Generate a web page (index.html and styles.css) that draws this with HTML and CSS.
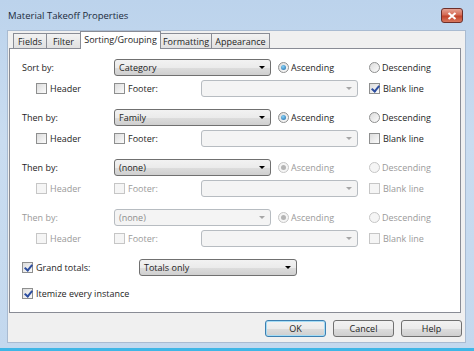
FILE: index.html
```html
<!DOCTYPE html>
<html lang="en">
<head>
    <meta charset="UTF-8">
    <title>Material Takeoff Properties</title>
    <link rel="stylesheet" href="styles.css">
</head>
<body>
    <div class="window">
        <div class="titlebar">
            <span class="title">Material Takeoff Properties</span>
            <span class="close">
                <svg width="10" height="8" viewBox="0 0 10 8"><path d="M1.5 1 L8.5 7 M8.5 1 L1.5 7" stroke="#fff" stroke-width="2"/></svg>
            </span>
        </div>

        <div class="client">
            <div class="tabs">
                <div class="tab t-fields">Fields</div>
                <div class="tab t-filter">Filter</div>
                <div class="tab t-sort active">Sorting/Grouping</div>
                <div class="tab t-format">Formatting</div>
                <div class="tab t-appear">Appearance</div>
            </div>

            <div class="panel">
                <!-- Nivel 1 -->
                <div class="group">
                    <div class="row">
                        <span class="label">Sort by:</span>
                        <div class="select wide">Category<span class="arrow"></span></div>
                        <label class="opt asc"><span class="radio on"></span>Ascending</label>
                        <label class="opt"><span class="radio"></span>Descending</label>
                    </div>
                    <div class="row">
                        <label class="opt hdr"><span class="check"></span>Header</label>
                        <label class="opt ftr"><span class="check"></span>Footer:</label>
                        <div class="select wide off"><span class="arrow"></span></div>
                        <label class="opt blank"><span class="check on"></span>Blank line</label>
                    </div>
                </div>

                <!-- Nivel 2 -->
                <div class="group">
                    <div class="row">
                        <span class="label">Then by:</span>
                        <div class="select wide">Family<span class="arrow"></span></div>
                        <label class="opt asc"><span class="radio on"></span>Ascending</label>
                        <label class="opt"><span class="radio"></span>Descending</label>
                    </div>
                    <div class="row">
                        <label class="opt hdr"><span class="check"></span>Header</label>
                        <label class="opt ftr"><span class="check"></span>Footer:</label>
                        <div class="select wide off"><span class="arrow"></span></div>
                        <label class="opt blank"><span class="check"></span>Blank line</label>
                    </div>
                </div>

                <!-- Nivel 3 -->
                <div class="group">
                    <div class="row">
                        <span class="label">Then by:</span>
                        <div class="select wide">(none)<span class="arrow"></span></div>
                        <label class="opt asc dim"><span class="radio on-dim"></span>Ascending</label>
                        <label class="opt dim"><span class="radio"></span>Descending</label>
                    </div>
                    <div class="row dim">
                        <label class="opt hdr"><span class="check"></span>Header</label>
                        <label class="opt ftr"><span class="check"></span>Footer:</label>
                        <div class="select wide off"><span class="arrow"></span></div>
                        <label class="opt blank"><span class="check"></span>Blank line</label>
                    </div>
                </div>

                <!-- Nivel 4 -->
                <div class="group">
                    <div class="row dim">
                        <span class="label">Then by:</span>
                        <div class="select wide off">(none)<span class="arrow"></span></div>
                        <label class="opt asc"><span class="radio on-dim"></span>Ascending</label>
                        <label class="opt"><span class="radio"></span>Descending</label>
                    </div>
                    <div class="row dim">
                        <label class="opt hdr"><span class="check"></span>Header</label>
                        <label class="opt ftr"><span class="check"></span>Footer:</label>
                        <div class="select wide off"><span class="arrow"></span></div>
                        <label class="opt blank"><span class="check"></span>Blank line</label>
                    </div>
                </div>

                <div class="row totals">
                    <label class="opt grand"><span class="check on"></span>Grand totals:</label>
                    <div class="select mid">Totals only<span class="arrow"></span></div>
                </div>
                <div class="row itemize">
                    <label class="opt"><span class="check on"></span>Itemize every instance</label>
                </div>
            </div>

            <div class="buttons">
                <button class="btn default">OK</button>
                <button class="btn">Cancel</button>
                <button class="btn">Help</button>
            </div>
        </div>
    </div>
</body>
</html>
```

FILE: styles.css
```css
/* Ventana estilo Windows 7 */
body {
    margin: 0;
    background: #fff;
    font-family: "Open Sans", "DejaVu Sans", sans-serif;
    font-size: 9px;
    color: #1e1e1e;
}

.window {
    width: 474px;
    height: 351px;
    box-sizing: border-box;
    background: linear-gradient(to bottom, #bcd3ec 0%, #c9dcf0 40%, #c3d8ee 100%);
    display: flex;
    flex-direction: column;
    position: relative;
}

.window::after {
    content: "";
    position: absolute;
    left: 0;
    right: 0;
    bottom: 0;
    height: 3px;
    background: #3fb6e6;
}

.titlebar {
    height: 30px;
    display: flex;
    align-items: center;
    justify-content: space-between;
    padding: 0 11px 0 8px;
    box-sizing: border-box;
}

.title {
    font-size: 9.5px;
    color: #1b2a3c;
    margin-top: 1px;
}

.close {
    width: 22px;
    height: 15px;
    border: 1px solid #6d2f2a;
    border-radius: 3px;
    box-sizing: border-box;
    background: linear-gradient(to bottom, #e5a293 0%, #d56b55 45%, #c2432a 55%, #d8785f 100%);
    display: flex;
    align-items: center;
    justify-content: center;
    margin-top: 1px;
}

.client {
    margin: 0 8px 8px 7px;
    flex: 1;
    background: #f0f0f0;
    border: 1px solid #a9bbd1;
    box-sizing: border-box;
    display: flex;
    flex-direction: column;
    padding: 0 0 0 1px;
}

/* Pestañas */
.tabs {
    display: flex;
    height: 17px;
    align-items: flex-end;
    padding-left: 4px;
}

.tab {
    height: 15px;
    box-sizing: border-box;
    border: 1px solid #898c95;
    border-bottom: none;
    border-left: none;
    background: linear-gradient(to bottom, #f2f2f2, #e1e1e1);
    display: flex;
    align-items: center;
    justify-content: center;
    color: #1e1e1e;
}

.t-fields { width: 34px; border-left: 1px solid #898c95; }
.t-filter { width: 34px; }
.t-sort { width: 81px; }
.t-format { width: 51px; }
.t-appear { width: 58px; }

.tab.active {
    height: 18px;
    background: #fff;
    border-left: 1px solid #898c95;
    margin-left: -1px;
    margin-bottom: -1px;
    position: relative;
    z-index: 1;
    padding-bottom: 3px;
}

.panel {
    width: 452px;
    height: 265px;
    box-sizing: border-box;
    background: #fff;
    border: 1px solid #898c95;
    padding: 10px 0 0 12px;
}

.group {
    margin-bottom: 12px;
}

.row {
    display: flex;
    align-items: center;
    height: 17px;
    margin-bottom: 4px;
}

.label {
    width: 92px;
}

.select {
    height: 17px;
    box-sizing: border-box;
    border: 1px solid #707070;
    border-radius: 3px;
    background: linear-gradient(to bottom, #f2f2f2 0%, #ebebeb 50%, #dddddd 51%, #cfcfcf 100%);
    padding: 0 0 0 4px;
    display: flex;
    align-items: center;
    position: relative;
}

.select.wide { width: 157px; }
.select.mid { width: 158px; }

.select .arrow {
    position: absolute;
    right: 5px;
    top: 6px;
    width: 0;
    height: 0;
    border-left: 3px solid transparent;
    border-right: 3px solid transparent;
    border-top: 3px solid #000;
}

.select.off {
    background: #f4f4f4;
    border-color: #b7bcc1;
    color: #8d8d8d;
}

.select.off .arrow {
    border-top-color: #a6a6a6;
}

.opt {
    display: flex;
    align-items: center;
}

.asc {
    width: 91px;
    margin-left: 7px;
}

.hdr {
    width: 78px;
    padding-left: 14px;
}

.ftr {
    width: 87px;
}

.blank {
    margin-left: 11px;
}

.grand {
    width: 117px;
}

/* Casillas y radios */
.check, .radio {
    width: 11px;
    height: 11px;
    box-sizing: border-box;
    border: 1px solid #8e8f8f;
    background: linear-gradient(135deg, #dcdcdc, #fbfbfb);
    margin-right: 3px;
    position: relative;
    flex-shrink: 0;
}

.radio {
    border-radius: 50%;
    margin-right: 2px;
}

.radio.on::after, .radio.on-dim::after {
    content: "";
    position: absolute;
    left: 2px;
    top: 2px;
    width: 5px;
    height: 5px;
    border-radius: 50%;
    background: radial-gradient(circle at 40% 35%, #8ad3f7, #1a66a8);
}

.radio.on-dim::after {
    background: #b5b5b5;
}

.check.on::after {
    content: "";
    position: absolute;
    left: 3px;
    top: 0px;
    width: 3px;
    height: 6px;
    border-right: 2px solid #2d4ea0;
    border-bottom: 2px solid #2d4ea0;
    transform: rotate(40deg);
}

.dim, .dim .label {
    color: #9a9a9a;
}

.dim .check, .dim .radio {
    border-color: #c6c6c6;
    background: #f5f5f5;
}

.totals {
    margin-top: 3px;
    margin-bottom: 0;
}

.itemize {
    margin-top: 9px;
}

/* Botones */
.buttons {
    display: flex;
    justify-content: flex-end;
    gap: 7px;
    padding: 7px 3px 0 0;
}

.btn {
    width: 61px;
    height: 17px;
    font-family: inherit;
    font-size: 9px;
    color: #1e1e1e;
    border: 1px solid #707070;
    border-radius: 3px;
    background: linear-gradient(to bottom, #f2f2f2 0%, #ebebeb 50%, #dddddd 51%, #cfcfcf 100%);
    padding: 0;
}

.btn.default {
    border-color: #3c7fb1;
    box-shadow: inset 0 0 0 1px #a5dcf5;
}
```
